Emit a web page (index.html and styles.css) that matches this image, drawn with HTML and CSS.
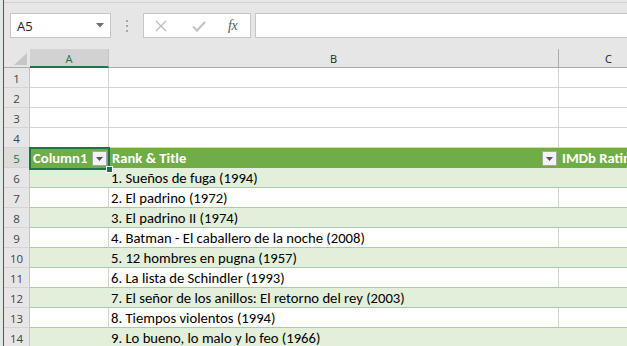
FILE: index.html
```html
<!DOCTYPE html>
<html>
<head>
<meta charset="utf-8">
<link rel="stylesheet" href="styles.css">
</head>
<body>
<div class="frame">
  <div class="topstrip"></div>
  <div class="fbar">
    <div class="namebox">
      <span class="nb-text">A5</span>
      <svg class="nb-arrow" width="8" height="5" viewBox="0 0 8 5"><path d="M0 0H8L4 4.5Z" fill="#707070"/></svg>
    </div>
    <svg class="dots" width="3" height="12" viewBox="0 0 3 12"><rect x="0" y="0" width="2" height="2" fill="#a6a6a6"/><rect x="0" y="5" width="2" height="2" fill="#a6a6a6"/><rect x="0" y="10" width="2" height="2" fill="#a6a6a6"/></svg>
    <div class="fbtns">
      <svg class="ic-x" width="12" height="12" viewBox="0 0 12 12"><path d="M1 1L11 11M11 1L1 11" stroke="#bdbdbd" stroke-width="1.3" fill="none"/></svg>
      <svg class="ic-ok" width="14" height="11" viewBox="0 0 14 11"><path d="M1 5.5L5 9.5L13 1" stroke="#c4c4c4" stroke-width="2.2" fill="none"/></svg>
      <span class="ic-fx">fx</span>
    </div>
    <div class="finput"></div>
  </div>

  <div class="sheet">
    <div class="grid">
      <div class="corner"><svg width="13" height="12" viewBox="0 0 13 12"><path d="M13 0V12H0Z" fill="#c6c6c6"/></svg></div>
      <div class="ch ch-sel">A</div>
      <div class="ch">B</div>
      <div class="ch">C</div>

      <div class="rh">1</div><div class="c ca"></div><div class="c"></div><div class="c"></div>
      <div class="rh">2</div><div class="c ca"></div><div class="c"></div><div class="c"></div>
      <div class="rh">3</div><div class="c ca"></div><div class="c"></div><div class="c"></div>
      <div class="rh">4</div><div class="c ca"></div><div class="c"></div><div class="c"></div>

      <div class="rh rh-sel">5</div>
      <div class="th">Column1<span class="fbtn"><svg width="7" height="4" viewBox="0 0 7 4"><path d="M0 0H7L3.5 4Z" fill="#555"/></svg></span></div>
      <div class="th">Rank &amp; Title<span class="fbtn"><svg width="7" height="4" viewBox="0 0 7 4"><path d="M0 0H7L3.5 4Z" fill="#555"/></svg></span></div>
      <div class="th">IMDb Rating</div>

      <div class="rh">6</div><div class="t band"></div><div class="t band">1. Sueños de fuga (1994)</div><div class="t band"></div>
      <div class="rh">7</div><div class="t plain"></div><div class="t plain">2. El padrino (1972)</div><div class="t plain"></div>
      <div class="rh">8</div><div class="t band"></div><div class="t band">3. El padrino II (1974)</div><div class="t band"></div>
      <div class="rh">9</div><div class="t plain"></div><div class="t plain">4. Batman - El caballero de la noche (2008)</div><div class="t plain"></div>
      <div class="rh">10</div><div class="t band"></div><div class="t band">5. 12 hombres en pugna (1957)</div><div class="t band"></div>
      <div class="rh">11</div><div class="t plain"></div><div class="t plain">6. La lista de Schindler (1993)</div><div class="t plain"></div>
      <div class="rh">12</div><div class="t band"></div><div class="t band">7. El señor de los anillos: El retorno del rey (2003)</div><div class="t band"></div>
      <div class="rh">13</div><div class="t plain"></div><div class="t plain">8. Tiempos violentos (1994)</div><div class="t plain"></div>
      <div class="rh">14</div><div class="t band"></div><div class="t band">9. Lo bueno, lo malo y lo feo (1966)</div><div class="t band"></div>
    </div>
    <div class="active"><span class="handle"></span></div>
  </div>
</div>
</body>
</html>
```

FILE: styles.css
```css
* { box-sizing: border-box; }
html, body {
  margin: 0;
  padding: 0;
  width: 627px;
  height: 346px;
  overflow: hidden;
  background: #e6e6e6;
}
.frame {
  margin-left: 3px;
  border-left: 1px solid #217346;
  height: 346px;
  background: #e6e6e6;
  overflow: hidden;
}
.topstrip {
  height: 3px;
  border-bottom: 1px solid #d2d2d2;
}
.fbar {
  display: flex;
  align-items: center;
  height: 46px;
  padding: 10px 0 11px 6px;
}
.namebox {
  width: 101px;
  height: 25px;
  background: #fff;
  border: 1px solid #c6c6c6;
  display: flex;
  align-items: center;
  justify-content: space-between;
  padding: 0 6px 0 6px;
  flex: none;
}
.nb-text {
  font-family: "Open Sans", "Noto Sans", sans-serif;
  font-size: 13px;
  color: #222;
}
.dots {
  margin-left: 15px;
  margin-right: 14px;
  flex: none;
}
.fbtns {
  width: 108px;
  height: 25px;
  background: #fff;
  border: 1px solid #c6c6c6;
  display: flex;
  align-items: center;
  padding-left: 11px;
  flex: none;
}
.ic-x { margin-right: 25px; }
.ic-ok { margin-right: 22px; margin-top: 1px; }
.ic-fx {
  font-family: "Liberation Serif", serif;
  font-style: italic;
  font-size: 14px;
  color: #5a5a5a;
  letter-spacing: -0.5px;
}
.finput {
  margin-left: 4px;
  height: 25px;
  flex: 1;
  background: #fff;
  border: 1px solid #c6c6c6;
  border-right: none;
}
.sheet {
  position: relative;
}
.grid {
  display: grid;
  grid-template-columns: 26px 79px 450px 100px;
  grid-template-rows: 19px repeat(14, 20px);
  font-family: "Carlito", "Calibri", "Lato", sans-serif;
  font-size: 14.67px;
}
.corner {
  background: #e6e6e6;
  border-bottom: 1px solid #ababab;
  display: flex;
  align-items: flex-end;
  justify-content: flex-end;
  padding: 0 3px 2px 0;
}
.corner svg { display: block; }
.ch {
  background: #e6e6e6;
  border-bottom: 1px solid #ababab;
  border-right: 1px solid #ababab;
  font-family: "Open Sans", "Noto Sans", sans-serif;
  font-size: 11px;
  color: #222;
  text-align: center;
  line-height: 20px;
}
.ch-sel {
  background: #d2d2d2;
  border-bottom: 2px solid #217346;
  border-right: 1px solid #c4c4c4;
  color: #217346;
}
.rh {
  background: #e6e6e6;
  border-bottom: 1px solid #d4d4d4;
  border-right: 1px solid #c4c4c4;
  font-family: "Open Sans", "Noto Sans", sans-serif;
  font-size: 11.5px;
  color: #444;
  text-align: center;
  line-height: 21px;
}
.rh-sel {
  background: #dcdcdc;
  color: #217346;
}
.c {
  background: #fff;
  border-bottom: 1px solid #d4d4d4;
  border-right: 1px solid #d4d4d4;
}
.th {
  background: #70ad47;
  color: #fff;
  font-weight: bold;
  padding-left: 3px;
  line-height: 21px;
  white-space: nowrap;
  overflow: hidden;
  position: relative;
  border-bottom: 1px solid #70ad47;
}
.fbtn {
  position: absolute;
  right: 2px;
  top: 3px;
  width: 15px;
  height: 15px;
  background: #f3f3f3;
  border: 1px solid #a6a6a6;
  display: flex;
  align-items: center;
  justify-content: center;
}
.fbtn svg { display: block; }
.t {
  color: #000;
  padding-left: 2px;
  line-height: 21px;
  white-space: nowrap;
  border-bottom: 1px solid #a9d08e;
}
.band {
  background: #e2efda;
}
.plain {
  background: #fff;
  border-right: 1px solid #d4d4d4;
}
.active {
  position: absolute;
  left: 25px;
  top: 98px;
  width: 81px;
  height: 23px;
  border: 2px solid #217346;
}
.handle {
  position: absolute;
  right: -5px;
  bottom: -5px;
  width: 7px;
  height: 7px;
  background: #217346;
  border: 1px solid #fff;
}
```
